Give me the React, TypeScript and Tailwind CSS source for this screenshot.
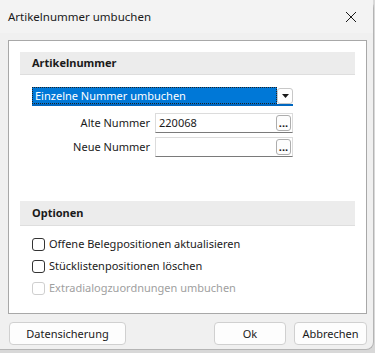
import React from 'react';

const font = { fontFamily: '"Noto Sans", "Open Sans", sans-serif' };

const Ellipsis = () => (
  <div className="flex h-[16px] w-[15px] items-end justify-center rounded-[3px] border border-[#adadad] bg-[#fdfdfd] pb-[2px] text-[11px] font-bold leading-none">
    ...
  </div>
);

const Field = ({ label, value }: { label: string; value: string }) => (
  <div className="flex items-center">
    <div className="w-[135px] pr-[5px] text-right">{label}</div>
    <div className="flex h-[20px] w-[138px] items-center justify-between border border-[#dcdcdc] border-b-[#7a7a7a] bg-white pl-[3px] pr-[1px]">
      <span>{value}</span>
      <Ellipsis />
    </div>
  </div>
);

const Check = ({ label, disabled }: { label: string; disabled?: boolean }) => (
  <div className={`flex h-[16px] items-center gap-[4px] ${disabled ? 'text-[#a0a0a0]' : 'text-[#1a1a1a]'}`}>
    <div className={`h-[13px] w-[13px] rounded-[3px] border bg-white ${disabled ? 'border-[#cfcfcf]' : 'border-[#333]'}`} />
    <span>{label}</span>
  </div>
);

const Button = ({ children, w }: { children: React.ReactNode; w: string }) => (
  <button className={`h-[23px] ${w} rounded-[4px] border border-[#d0d0d0] bg-[#fdfdfd] text-[11px] text-[#1a1a1a]`}>
    {children}
  </button>
);

export default function App() {
  return (
    <div className="relative h-[353px] w-[375px] overflow-hidden bg-[#d8d8d8] text-[11px] leading-[16px] text-[#1a1a1a]" style={font}>
      <div className="flex h-[350px] w-[374px] flex-col rounded-r-[8px] border-r border-b border-[#b4b4b4] bg-[#f0f0f0]">
        {/* Title bar */}
        <div className="flex h-[33px] shrink-0 items-center justify-between bg-[#f3f3f3] pl-[8px] pr-[16px]">
          <span className="text-[11.5px]">Artikelnummer umbuchen</span>
          <svg width="12" height="12" viewBox="0 0 12 12">
            <path d="M1 1 L11 11 M11 1 L1 11" stroke="#1a1a1a" strokeWidth="1" />
          </svg>
        </div>

        {/* Content panel */}
        <div className="ml-[8px] mr-[6px] mt-[7px] h-[274px] shrink-0 border border-[#a8a8a8] bg-white px-[11px] pt-[11px]">
          <div className="flex h-[23px] items-center border-b border-[#dedede] bg-[#ececec] pl-[12px] font-bold">
            Artikelnummer
          </div>

          <div className="mt-[12px] pl-[12px]">
            <div className="flex h-[19px] w-[261px] items-center border-b-2 border-[#0067c0]">
              <div className="flex h-[17px] flex-1 items-center border border-dotted border-[#222] bg-[#0078d7] pl-[2px] text-white">
                Einzelne Nummer umbuchen
              </div>
              <div className="flex h-[16px] w-[16px] items-center justify-center rounded-[3px] border border-[#c8c8c8] bg-white">
                <svg width="7" height="4" viewBox="0 0 7 4">
                  <path d="M0 0 L7 0 L3.5 4 Z" fill="#1a1a1a" />
                </svg>
              </div>
            </div>
          </div>

          <div className="mt-[7px] flex flex-col gap-[4px]">
            <Field label="Alte Nummer" value="220068" />
            <Field label="Neue Nummer" value="" />
          </div>

          <div className="mt-[44px] flex h-[25px] items-center border-b border-[#dedede] bg-[#ececec] pl-[12px] font-bold">
            Optionen
          </div>

          <div className="mt-[10px] flex flex-col gap-[6px] pl-[12px]">
            <Check label="Offene Belegpositionen aktualisieren" />
            <Check label="Stücklistenpositionen löschen" />
            <Check label="Extradialogzuordnungen umbuchen" disabled />
          </div>
        </div>

        {/* Buttons */}
        <div className="ml-[9px] mr-[6px] mt-[8px] flex shrink-0 items-center">
          <Button w="w-[117px]">Datensicherung</Button>
          <div className="flex-1" />
          <Button w="w-[72px]">Ok</Button>
          <div className="w-[8px]" />
          <Button w="w-[73px]">Abbrechen</Button>
        </div>
      </div>
    </div>
  );
}
